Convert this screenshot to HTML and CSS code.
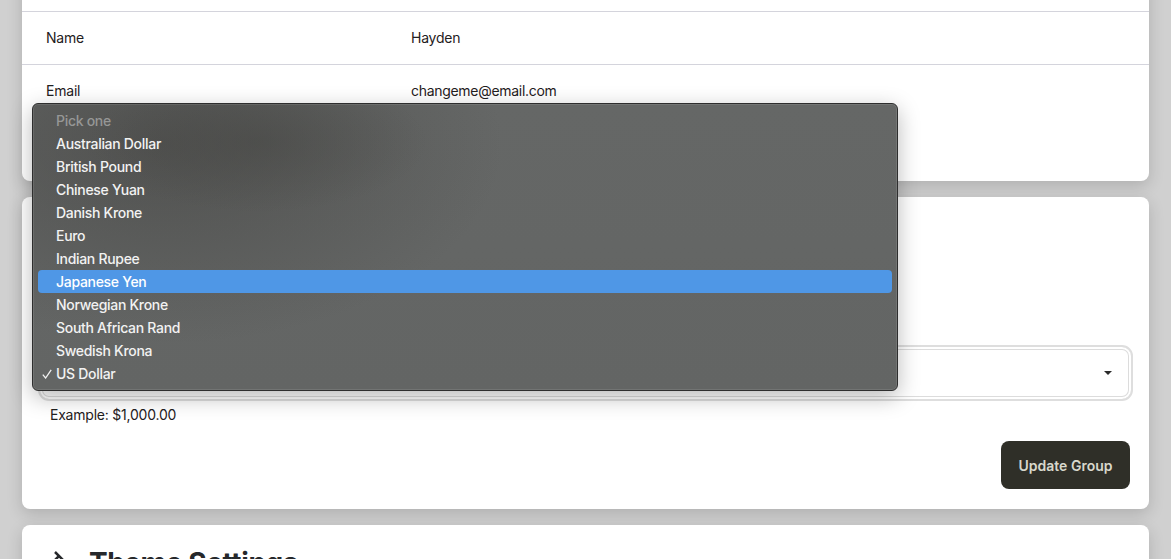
FILE: index.html
```html
<!DOCTYPE html>
<html lang="en">
<head>
    <meta charset="UTF-8">
    <title>Group Settings</title>
    <link rel="stylesheet" href="styles.css">
</head>
<body>
    <div class="page">
        <div class="card card-info">
            <div class="info-row info-row-top"></div>
            <div class="info-row">
                <div class="info-label">Name</div>
                <div class="info-value">Hayden</div>
            </div>
            <div class="info-row">
                <div class="info-label">Email</div>
                <div class="info-value info-value-email">changeme@email.com</div>
            </div>
        </div>

        <div class="card card-group">
            <div class="select-box">
                <span class="select-arrow"></span>
            </div>
            <div class="help-text">Example: $1,000.00</div>
            <div class="actions">
                <button class="btn-update">Update Group</button>
            </div>
        </div>

        <div class="card card-theme">
            <div class="theme-title">
                <svg class="theme-icon" viewBox="0 0 24 24" width="24" height="24">
                    <path d="M9 1 L18 10 M13 5 L8 10" fill="none" stroke="#26282b" stroke-width="2.5"/>
                </svg>
                <span>Theme Settings</span>
            </div>
        </div>
    </div>

    <div class="menu">
        <div class="menu-item menu-item-disabled">Pick one</div>
        <div class="menu-item">Australian Dollar</div>
        <div class="menu-item">British Pound</div>
        <div class="menu-item">Chinese Yuan</div>
        <div class="menu-item">Danish Krone</div>
        <div class="menu-item">Euro</div>
        <div class="menu-item">Indian Rupee</div>
        <div class="menu-item menu-item-active">Japanese Yen</div>
        <div class="menu-item">Norwegian Krone</div>
        <div class="menu-item">South African Rand</div>
        <div class="menu-item">Swedish Krona</div>
        <div class="menu-item">
            <svg class="menu-check" viewBox="0 0 10 10" width="10" height="10">
                <path d="M0.8 5.6 L3.6 9 L9.2 0.8" fill="none" stroke="#f2f2f2" stroke-width="1.3"/>
            </svg>
            US Dollar
        </div>
    </div>
</body>
</html>
```

FILE: styles.css
```css
* {
    margin: 0;
    padding: 0;
    box-sizing: border-box;
    font-family: 'Inter', 'Liberation Sans', sans-serif;
}

html, body {
    height: 559px;
    overflow: hidden;
}

body {
    background: #d0d0d0;
    position: relative;
}

.page {
    display: flex;
    flex-direction: column;
    gap: 16px;
    padding: 0 22px;
    margin-top: -21px;
}

.card {
    background: #ffffff;
    border-radius: 8px;
    box-shadow: 0 5px 16px rgba(0, 0, 0, 0.16);
}

.card-info {
    height: 202px;
}

.info-row {
    display: flex;
    align-items: center;
    height: 53px;
    padding: 0 24px 2px 24px;
    border-top: 1px solid #d4d4dc;
    font-size: 14px;
    letter-spacing: -0.22px;
    color: #1f2021;
}

.info-row-top {
    height: 32px;
    border-top: none;
}

.info-label {
    width: 365px;
    font-weight: 400;
}

.info-value-email {
    letter-spacing: -0.3px;
}

.card-group {
    height: 312px;
    padding: 148px 16px 0 16px;
}

.select-box {
    height: 56px;
    border: 2px solid #dedede;
    border-radius: 11px;
    box-shadow: inset 0 0 0 2px #ffffff,
                inset 0 0 0 3px #dcdcdc;
    display: flex;
    align-items: center;
    justify-content: flex-end;
    padding-right: 19px;
}

.select-arrow {
    width: 0;
    height: 0;
    border-left: 4px solid transparent;
    border-right: 4px solid transparent;
    border-top: 4px solid #2b2b2b;
}

.help-text {
    margin-top: 4px;
    padding-left: 12px;
    font-size: 14px;
    letter-spacing: -0.22px;
    line-height: 20px;
    color: #1f2021;
}

.actions {
    display: flex;
    justify-content: flex-end;
    margin-top: 16px;
    padding-right: 3px;
}

.btn-update {
    width: 129px;
    height: 48px;
    background: #2f2f28;
    color: #d8d8cc;
    border: none;
    border-radius: 8px;
    font-size: 14px;
    font-weight: 600;
}

.card-theme {
    height: 80px;
    padding: 21px 24px;
}

.theme-title {
    display: flex;
    align-items: center;
    gap: 19px;
    font-size: 28px;
    font-weight: 700;
    letter-spacing: -0.4px;
    color: #26282b;
}

.menu {
    position: absolute;
    left: 32px;
    top: 103px;
    width: 866px;
    height: 288px;
    padding: 5px;
    background:
        radial-gradient(ellipse 170px 70px at 225px 38px, rgba(66, 66, 63, 0.4), transparent),
        radial-gradient(ellipse 340px 200px at 130px 40px, rgba(70, 70, 68, 0.65), transparent),
        linear-gradient(180deg, #656766, #636564);
    border: 1px solid #2e2e2e;
    border-radius: 6px;
    box-shadow: inset 0 0 0 1px rgba(255, 255, 255, 0.1),
                0 6px 22px rgba(0, 0, 0, 0.28);
}

.menu-item {
    position: relative;
    height: 23px;
    padding-left: 18px;
    border-radius: 4px;
    font-size: 14px;
    font-weight: 500;
    letter-spacing: -0.3px;
    line-height: 23px;
    color: #f2f2f2;
}

.menu-item-disabled {
    color: #969796;
}

.menu-item-active {
    background: #4f97e6;
    color: #ffffff;
}

.menu-check {
    position: absolute;
    left: 4px;
    top: 7px;
}
```
